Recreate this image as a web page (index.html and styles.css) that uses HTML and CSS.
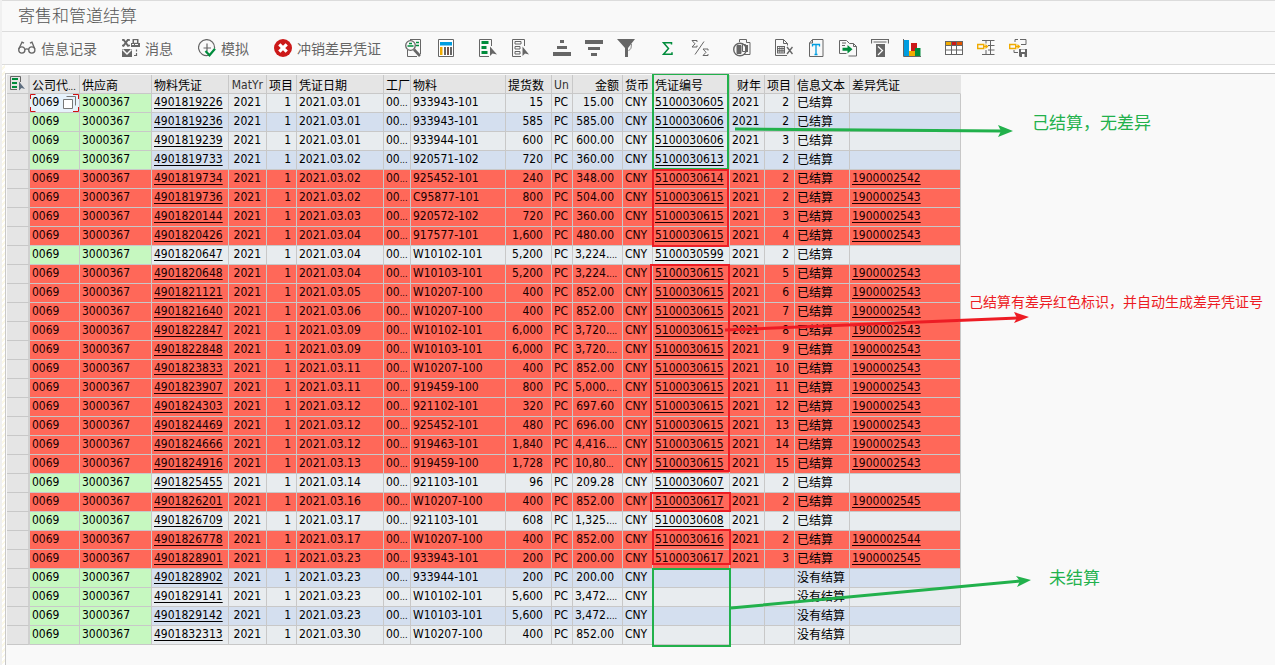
FILE: index.html
```
<!DOCTYPE html>
<html lang="zh-CN">
<head>
<meta charset="utf-8">
<title>寄售和管道结算</title>
<link rel="stylesheet" href="styles.css">
</head>
<body>
<div class="window">
  <header class="titlebar"><h1>寄售和管道结算</h1></header>

  <nav class="toolbar" aria-label="应用工具栏">
    <div class="actions">
      <button type="button"><svg class="icon" viewBox="0 0 18 18" fill="none" stroke="#666" stroke-width="1.3"><circle cx="3.8" cy="11" r="3.1"/><circle cx="13.8" cy="11" r="3.1"/><path d="M6.9 10.5q1.9-1.4 3.8 0M.8 10 4 3.2l2 1M16.8 10 14 3.2l-2 1"/></svg>信息记录</button>
      <button type="button"><svg class="icon" viewBox="0 0 18 18"><path d="M1 0l5.500 7.500M6.500 0 1 7.500" stroke="#666" stroke-width="2"/><path d="M0 1h2M6 1h2M0 6.500h2M6 6.500h2" stroke="#666" stroke-width="1.400"/><path d="M10.500 0h6v4H18v4H9V4h1.500z" fill="#666"/><path d="M12 1.200h3v2.600h-3z" fill="#f9f9f9"/><path d="M10 5.500h2M13 5.500h3" stroke="#f9f9f9"/><path d="M0 10h10v8H0z" fill="#666"/><path d="M.5 10.500l4.500 4.500 4.500-4.500" fill="none" stroke="#f9f9f9" stroke-width="1.500"/><path d="M12 16.500h2.500V14M14.500 10.500v2" stroke="#666" stroke-width="1.200" fill="none"/></svg>消息</button>
      <button type="button"><svg class="icon" viewBox="0 0 18 18" fill="none"><path d="M11 16.200A8 8 0 1 1 16.500 9.500" stroke="#666" stroke-width="1.200"/><path d="M9 4.500v8M5.500 9H13" stroke="#666" stroke-width="1.200"/><path d="M7.500 12l4 4.300 5.500-6.600" stroke="#008c3c" stroke-width="2.200"/></svg>模拟</button>
      <button type="button"><svg class="icon" viewBox="0 0 18 18"><circle cx="9" cy="9" r="9" fill="#cc1919"/><path d="M5.300 5.300l7.400 7.400M12.700 5.300l-7.400 7.400" stroke="#fff" stroke-width="3.200"/></svg>冲销差异凭证</button>
    </div>
    <div class="tools">
      <div class="group">
        <button type="button" aria-label="明细"><svg class="icon" viewBox="0 0 18 18" fill="none" stroke="#666"><path d="M5 .5h10.500V15M2.500 11v6.500H12"/><path d="M11 3.500h3M11 6.500h3" stroke="#008c3c" stroke-width="1.600"/><circle cx="5.500" cy="6.500" r="4.800" fill="#f9f9f9" stroke-width="1.300"/><path d="M2.500 7h6M4 4.500h3" stroke="#008c3c" stroke-width="1.400"/><path d="M9 10.500l6 6.500" stroke-width="2.600"/></svg></button>
        <button type="button" aria-label="计算"><svg class="icon" viewBox="0 0 18 18"><path d="M1.500 .5h15v17h-15z" fill="#fff" stroke="#666"/><path d="M3 3h12v3.500H3z" fill="#009de0"/><path d="M3 8h2.500v8H3z" fill="#f0ab00"/><path d="M7 8h2v8H7zM13 8h2v8h-2z" fill="#666"/><path d="M10 8h2v8h-2z" fill="#7a5548"/></svg></button>
      </div>
      <div class="group">
        <button type="button" aria-label="全选"><svg class="icon" viewBox="0 0 18 18"><path d="M12.500 7V.5h-12v17H10" fill="none" stroke="#666"/><path d="M2.500 2h7v3h-7zM2.500 7h5v3h-5zM2.500 12h6v3h-6z" fill="#008c3c"/><path d="M11 7.500V17l2.500-2.500 4.500 1z" fill="#666"/></svg></button>
        <button type="button" aria-label="取消选择"><svg class="icon" viewBox="0 0 18 18"><path d="M13.500 7V.5h-12v17H10M4 2.500h6v2.500H4zM4 7.500h5V10H4zM4 12.500h5V15H4z" fill="none" stroke="#666"/><path d="M11.500 7.500V17l2.500-2.500 4 1z" fill="#666"/></svg></button>
      </div>
      <div class="group">
        <button type="button" aria-label="升序"><svg class="icon" viewBox="0 0 18 18" fill="#666"><path d="M7 1h4v3H7zM4 7h10v3H4zM0 13h18v4H0z"/></svg></button>
        <button type="button" aria-label="降序"><svg class="icon" viewBox="0 0 18 18" fill="#666"><path d="M0 1h18v4H0zM3 8h12v3H3zM6 14h6v3H6z"/></svg></button>
        <button type="button" aria-label="过滤器"><svg class="icon" viewBox="0 0 18 18"><path d="M0 0h18l-7 9v9H8V9z" fill="#666"/><path d="M14.500 5q.5 5-3 7" fill="none" stroke="#888"/></svg></button>
      </div>
      <div class="group">
        <button type="button" aria-label="总计"><svg class="icon" viewBox="0 0 18 18" fill="none" stroke="#008c3c" stroke-width="1.500"><path d="M12.500 5.500V3.800H4.500l5 5.700-5 5.700h8.500v-1.900"/></svg></button>
        <button type="button" aria-label="小计"><svg class="icon" viewBox="0 0 18 18" fill="none" stroke="#666"><path d="M6 3V1.500H1L4 4.800 1 8h5V6.500M17 11.500V10h-5l3 3.300-3 3.200h5V15M13 2.500 4 15.500"/></svg></button>
      </div>
      <div class="group">
        <button type="button" aria-label="打印预览"><svg class="icon" viewBox="0 0 18 18" fill="none" stroke="#666"><path d="M6.500 3V.5h7v3M13.500 3.500h3.500v12h-6"/><circle cx="7" cy="10.500" r="6.300" stroke-width="1.400"/><path d="M4 6.500h4v8H4z" fill="#666"/><path d="M9.500 5.500h3v7h-3z"/><path d="M14 6v7" stroke-width="2"/></svg></button>
      </div>
      <div class="group">
        <button type="button" aria-label="电子表格"><svg class="icon" viewBox="0 0 18 18" fill="none" stroke="#666"><path d="M12 16.500H.5V.5h8l4 4v2M8.500 .5v4h4"/><path d="M2 7h8v7.500H2z" fill="#666" stroke="none"/><path d="M3 8.500h6M3 10.700h6M3 13h6" stroke="#f9f9f9" stroke-dasharray="1.400 .8"/><path d="M12 8l5.500 7M17.500 8 12 15" stroke-width="1.400"/></svg></button>
        <button type="button" aria-label="文字处理"><svg class="icon" viewBox="0 0 18 18" fill="none" stroke="#666"><path d="M5.500.5H16v17H2.500V4zM5.500.5V4h-3"/><path d="M5.500 7.500v-2h7v2M9 5.500v10M7.500 15.500h3" stroke="#009de0" stroke-width="1.300"/></svg></button>
        <button type="button" aria-label="本地文件"><svg class="icon" viewBox="0 0 18 18" fill="none" stroke="#666"><path d="M7.500 14.500h-7v-13h7l3 3M3 4h4M3 6.500h3M10.500 4.500h4l3 3v9.500h-8M14.500 4.500v3h3"/><path d="M3.500 8.700h5V6l5 4.200-5 4.200v-2.700h-5z" fill="#008c3c" stroke="none"/></svg></button>
        <button type="button" aria-label="邮件收件人"><svg class="icon" viewBox="0 0 18 18"><path d="M.5 4.500v-4h17v4M2.500 3h13" fill="none" stroke="#666" stroke-width="1.200"/><path d="M5 5h9v13H5z" fill="#666"/><path d="M7 7.500l4.500 4L7 16" fill="none" stroke="#fff" stroke-width="1.200"/></svg></button>
        <button type="button" aria-label="图形"><svg class="icon" viewBox="0 0 18 18"><path d="M.5 0v17.500H18" fill="none" stroke="#666"/><path d="M1 1h5v16H1z" fill="#009de0"/><path d="M8 4h6v8H8z" fill="#cc1919"/><path d="M6 12h6v5H6z" fill="#f0ab00"/><path d="M12 9h5.500v8H12z" fill="#008c3c"/></svg></button>
      </div>
      <div class="group">
        <button type="button" aria-label="选择布局"><svg class="icon" viewBox="0 0 18 18"><path d="M0 2h18v14H0z" fill="#666"/><path d="M1 3h5v3H1z" fill="#f0ab00"/><path d="M7 3h4v3H7z" fill="#cc1919"/><path d="M12 3h5v3h-5z" fill="#e35500"/><path d="M1 7h5v3.500H1zM7 7h4v3.500H7zM12 7h5v3.500h-5zM1 11.500h5V15H1zM7 11.500h4V15H7zM12 11.500h5V15h-5z" fill="#fff"/></svg></button>
        <button type="button" aria-label="更改布局"><svg class="icon" viewBox="0 0 18 18" fill="none" stroke="#666"><path d="M5 1.500h12.500M5 15.500h12.500M9 1.500v3M13.500 1.500v14M9 11v4.500M11 6.500h6.500M11 11h6.500"/><path d="M.7 5.500h6v4h-6zM6.500 7.500h3" stroke="#f0ab00" stroke-width="1.400"/><path d="M8.500 5v5l3-2.500z" fill="#f0ab00" stroke="none"/></svg></button>
        <button type="button" aria-label="保存布局"><svg class="icon" viewBox="0 0 18 18" fill="none" stroke="#666"><path d="M6 3V.5h3M11 .5h6v5h-5M5 11v2.500h4"/><path d="M.7 5.500h6v4h-6zM6.500 7.500h3" stroke="#f0ab00" stroke-width="1.400"/><path d="M8.500 5v5l3-2.500z" fill="#f0ab00" stroke="none"/><path d="M10 10h8v8h-7l-1-1z" fill="#666" stroke="none"/><path d="M12 10.500h4v2.500h-4zM13 15h2.500v3H13z" fill="#fff" stroke="none"/></svg></button>
      </div>
    </div>
  </nav>

  <main class="content">
    <section class="grid">
      <table>
        <colgroup>
          <col class="w-mark"><col class="w-company"><col class="w-vendor"><col class="w-doc"><col class="w-year"><col class="w-item"><col class="w-date"><col class="w-plant"><col class="w-material"><col class="w-qty"><col class="w-unit"><col class="w-amount"><col class="w-item"><col class="w-doc"><col class="w-fiscal"><col class="w-item"><col class="w-info"><col class="w-diff">
        </colgroup>
        <thead>
          <tr>
            <th class="mark" aria-label="全选"><svg class="icon" viewBox="0 0 18 18"><path d="M13.500 7V1.500h-10v13H10" fill="none" stroke="#666"/><path d="M5 3h6v2H5zM5 7h5v2H5zM5 11h5v2H5z" fill="#008c3c"/><path d="M12 6.500v9l2.500-2.500 3.500 1z" fill="#5f6f80"/></svg></th>
            <th>公司代<span class="more">...</span></th><th>供应商</th><th>物料凭证</th><th class="latin end">MatYr</th><th>项目</th><th>凭证日期</th><th>工厂</th><th>物料</th><th class="qty">提货数</th><th class="latin">Un</th><th class="end">金额</th><th>货币</th><th>凭证编号</th><th class="end">财年</th><th>项目</th><th>信息文本</th><th>差异凭证</th>
          </tr>
        </thead>
        <tbody id="rows"></tbody>
      </table>

      <svg class="marks" width="1269" height="591" viewBox="6 74 1269 591" fill="none" stroke-width="2" aria-hidden="true">
        <g stroke="#22b14c">
          <path d="M653 74h75v95h-75zM653 569h77v77h-77z"/>
          <path d="M735 129 1002 131M731 608 1020 581" stroke-width="3"/>
          <path d="M1013 131l-15-6 3 6-3 6zM1031 580l-15-4 4 5-3 6z" fill="#22b14c" stroke="none"/>
        </g>
        <g stroke="#ed1c24">
          <path d="M653 170h75v76h-75zM651 265h78v206h-78zM651 493h79v18h-79zM653 530h77v34h-77z"/>
          <path d="M725 330 1018 318" stroke-width="3"/>
          <path d="M1029 317l-15-5 3 6-3 5z" fill="#ed1c24" stroke="none"/>
        </g>
      </svg>
      <p class="note note-settled">己结算，无差异</p>
      <p class="note note-diff">己结算有差异红色标识，并自动生成差异凭证号</p>
      <p class="note note-open">未结算</p>
    </section>
  </main>
</div>
<script src="rows.js"></script>
</body>
</html>
```
FILE: styles.css
```
* { box-sizing: border-box; }

body {
  margin: 0;
  background: #f9f9f9;
  color: #000;
  font-family: "DejaVu Sans Condensed", "Noto Sans", "Noto Sans CJK SC", sans-serif;
  font-size: 12px;
}

.window {
  display: flex;
  flex-direction: column;
  min-height: 100vh;
  border-left: 2px solid #f0f0f0;
  overflow: hidden;
}

.titlebar {
  height: 32px;
  padding: 0 16px;
  border-top: 1px solid #dcdcdc;
  border-bottom: 1px solid #dcdcdc;
}

.titlebar h1 {
  margin: 0;
  color: #555;
  font-family: "Noto Sans CJK SC", sans-serif;
  font-size: 17px;
  font-weight: 300;
  line-height: 27px;
}

.toolbar {
  display: flex;
  gap: 17px;
  height: 33px;
  padding: 0 16px;
  border-bottom: 1px solid #dcdcdc;
}

.toolbar button {
  display: flex;
  align-items: center;
  gap: 5px;
  height: 32px;
  padding: 0;
  border: 0;
  background: none;
  color: #666;
  font-family: "Noto Sans CJK SC", sans-serif;
  font-size: 14px;
  line-height: 20px;
  white-space: nowrap;
}

.actions { display: flex; gap: 25px; }
.tools { display: flex; gap: 10px; }
.group { display: flex; }
.group button { width: 32px; justify-content: center; }
.icon { display: block; flex: none; width: 18px; height: 18px; }

.content {
  display: flex;
  flex: 1;
  padding: 8px 0 0 3px;
  background: repeating-linear-gradient(135deg, #fff 0 2px, #fbf8e8 2px 4px) left / 3px 100% no-repeat, #fff;
}

.grid {
  position: relative;
  flex: 1;
  padding: 1px;
  border-top: 1px solid #c8c8c8;
  border-left: 1px solid #c8c8c8;
  background: #f9f9f9;
}

table {
  width: 954px;
  table-layout: fixed;
  border-collapse: separate;
  border-spacing: 0;
}

.w-mark { width: 23px; }
.w-company { width: 50px; }
.w-vendor { width: 72px; }
.w-doc { width: 77px; }
.w-year { width: 38px; }
.w-item { width: 30px; }
.w-date { width: 87px; }
.w-plant { width: 27px; }
.w-material { width: 95px; }
.w-qty { width: 46px; }
.w-unit { width: 21px; }
.w-amount { width: 50px; }
.w-fiscal { width: 35px; }
.w-info { width: 55px; }
.w-diff { width: 111px; }

th, td {
  height: 19px;
  padding: 0 0 0 2px;
  border-right: 1px solid #c8c8c8;
  border-bottom: 1px solid #c8c8c8;
  line-height: 16px;
  text-align: left;
  vertical-align: top;
  white-space: nowrap;
  overflow: hidden;
}

th {
  padding-top: 2px;
  background: #e5e5e5;
  font-family: "Noto Sans CJK SC", sans-serif;
  font-weight: 400;
}

th:last-child { border-right-color: #e5e5e5; }
th.latin { color: #333; font-family: "DejaVu Sans Condensed", "Noto Sans", sans-serif; }
th.end { padding-right: 3px; text-align: right; }
th.qty { padding-right: 7px; text-align: right; }
th.mark { padding: 0; }

.mark {
  border-right: 2px solid #d0d0d0;
  background: #e5e5e5;
}

tbody tr { background: #e8ecef; }
tbody tr:nth-child(even) { background: #d4dfef; }
tbody tr.diff { background: #ff6859; color: #200000; }
.key { background: #c6f8c0; }
.diff .key { background: #ff6859; }
td.number { padding-right: 5px; text-align: right; }
td.wide { padding-right: 8px; text-align: right; }
td.cut { padding-right: 0; text-align: left; }
td.text { font-family: "Noto Sans CJK SC", sans-serif; color: #000; }

.more {
  font-family: "DejaVu Sans Condensed", "Noto Sans", sans-serif;
  font-size: 9px;
  line-height: 1;
}

td a {
  color: inherit;
  text-decoration: underline;
  text-underline-offset: 2px;
}

td.focus {
  position: relative;
  background: #e6f2fb;
  overflow: visible;
}

.focus svg {
  position: absolute;
  top: 0;
  left: 0;
}

.marks {
  position: absolute;
  top: 0;
  left: 0;
  pointer-events: none;
}

.note {
  position: absolute;
  margin: 0;
  font-family: "Noto Sans CJK SC", sans-serif;
  line-height: 20px;
  white-space: nowrap;
}

.note-settled { top: 38px; left: 1026px; color: #22b14c; font-size: 17px; }
.note-diff { top: 217px; left: 963px; color: #ed1c24; font-size: 14px; }
.note-open { top: 493px; left: 1043px; color: #22b14c; font-size: 17px; }
```
FILE: rows.js
```
// Material doc | date | material | quantity | amount | settlement doc | item | difference doc
const data = `
4901819226|03.01|933943-101|15|15.00|5100030605|2|
4901819236|03.01|933943-101|585|585.00|5100030606|2|
4901819239|03.01|933944-101|600|600.00|5100030606|3|
4901819733|03.02|920571-102|720|360.00|5100030613|2|
4901819734|03.02|925452-101|240|348.00|5100030614|2|1900002542
4901819736|03.02|C95877-101|800|504.00|5100030615|2|1900002543
4901820144|03.03|920572-102|720|360.00|5100030615|3|1900002543
4901820426|03.04|917577-101|1,600|480.00|5100030615|4|1900002543
4901820647|03.04|W10102-101|5,200|3,224.~|5100030599|2|
4901820648|03.04|W10103-101|5,200|3,224.~|5100030615|5|1900002543
4901821121|03.05|W10207-100|400|852.00|5100030615|6|1900002543
4901821640|03.06|W10207-100|400|852.00|5100030615|7|1900002543
4901822847|03.09|W10102-101|6,000|3,720.~|5100030615|8|1900002543
4901822848|03.09|W10103-101|6,000|3,720.~|5100030615|9|1900002543
4901823833|03.11|W10207-100|400|852.00|5100030615|10|1900002543
4901823907|03.11|919459-100|800|5,000.~|5100030615|11|1900002543
4901824303|03.12|921102-101|320|697.60|5100030615|12|1900002543
4901824469|03.12|925452-101|480|696.00|5100030615|13|1900002543
4901824666|03.12|919463-101|1,840|4,416.~|5100030615|14|1900002543
4901824916|03.13|919459-100|1,728|10,80~|5100030615|15|1900002543
4901825455|03.14|921103-101|96|209.28|5100030607|2|
4901826201|03.16|W10207-100|400|852.00|5100030617|2|1900002545
4901826709|03.17|921103-101|608|1,325.~|5100030608|2|
4901826778|03.17|W10207-100|400|852.00|5100030616|2|1900002544
4901828901|03.23|933943-101|200|200.00|5100030617|3|1900002545
4901828902|03.23|933944-101|200|200.00|||
4901829141|03.23|W10102-101|5,600|3,472.~|||
4901829142|03.23|W10103-101|5,600|3,472.~|||
4901832313|03.30|W10207-100|400|852.00|||`;

const more = '<span class="more">...</span>';
const link = (text) => (text ? `<a href="#">${text}</a>` : "");
const focusMark = `<svg width="49" height="18" viewBox="0 0 49 18" fill="none"><path d="M.5 5V.5h5M43 .5h5.500V5M.5 13v4.500h5M43 17.500h5.500V13" stroke="#d01010"/><path d="M36.500 2.500h9v9" stroke="#777"/><path d="M33.500 5.500h9v9h-9z" fill="#fff" stroke="#777"/></svg>`;

document.getElementById("rows").innerHTML = data.trim().split("\n").map((line, index) => {
  const [doc, date, material, qty, amount, settled, item, diff] = line.split("|");
  const cut = amount.endsWith("~");
  return `<tr${diff ? ' class="diff"' : ""}>
    <td class="mark"></td>
    <td class="key${index === 0 ? " focus" : ""}">0069${index === 0 ? focusMark : ""}</td>
    <td class="key">3000367</td>
    <td>${link(doc)}</td>
    <td class="number">2021</td>
    <td class="number">1</td>
    <td>2021.${date}</td>
    <td>00${more}</td>
    <td>${material}</td>
    <td class="wide">${qty}</td>
    <td>PC</td>
    <td class="wide${cut ? " cut" : ""}">${amount.replace("~", more)}</td>
    <td>CNY</td>
    <td>${link(settled)}</td>
    <td>${settled ? "2021" : ""}</td>
    <td class="number">${item}</td>
    <td class="text">${settled ? "已结算" : "没有结算"}</td>
    <td>${link(diff)}</td>
  </tr>`;
}).join("");
```
